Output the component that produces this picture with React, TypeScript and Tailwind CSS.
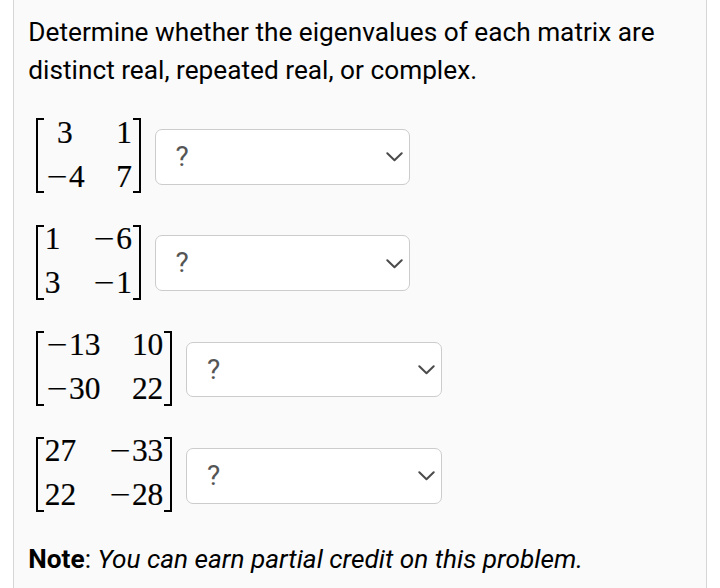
type Problem = { columns: number[][] };

const problems: Problem[] = [
  { columns: [[3, -4], [1, 7]] },
  { columns: [[1, 3], [-6, -1]] },
  { columns: [[-13, -30], [10, 22]] },
  { columns: [[27, 22], [-33, -28]] },
];

function Entry({ value }: { value: number }) {
  return (
    <span className="flex h-[44px] items-center justify-center leading-[44px]">
      {value < 0 && (
        <span className="inline-block w-[24.3px] origin-center scale-x-[1.21] text-center [-webkit-text-stroke:0.2px_#fafafa]">−</span>
      )}
      <span className="[-webkit-text-stroke:0.2px_black]">{Math.abs(value)}</span>
    </span>
  );
}

function Matrix({ columns }: Problem) {
  return (
    <div className="flex h-[75px] font-['Liberation_Serif',serif] text-[31.4px] text-black">
      <span className="w-2 border-y-2 border-l-2 border-black" />
      <div className="-mt-[9.9px] flex gap-[31.4px] pr-px pl-[0.5px]">
        {columns.map((column, i) => (
          <div key={i} className="pt-[2px]">
            {column.map((value, j) => (
              <Entry key={j} value={value} />
            ))}
          </div>
        ))}
      </div>
      <span className="w-2 border-y-2 border-r-2 border-black" />
    </div>
  );
}

function AnswerSelect() {
  return (
    <button className="mt-[10.75px] ml-[14.2px] flex h-[55.6px] w-[255.4px] items-center justify-between rounded-[7px] border border-[#cccccc] bg-white pr-[6px] pl-[19.5px] text-[28px] text-[#555555]">
      <span className="leading-none">?</span>
      <svg width="17" height="10" viewBox="0 0 17 10" fill="none" className="mt-px">
        <path d="M1.3 1.2L8.5 8.2L15.7 1.2" stroke="#4b4b4b" strokeWidth="2" strokeLinecap="round" strokeLinejoin="round" />
      </svg>
    </button>
  );
}

export default function App() {
  return (
    <div className="h-[588px] overflow-hidden bg-white pr-[13px] pl-[13px] font-['Roboto',sans-serif] text-[26.22px] text-black">
      <main className="h-full border-x border-[#d6d6d6] bg-[#fafafa] pt-[13px] pl-[14.3px]">
        <p className="leading-[38px]">
          Determine whether the eigenvalues of each matrix are
          <br />
          distinct real, repeated real, or complex.
        </p>
        <div className="mt-[29.4px] flex flex-col gap-[31.3px] pl-2">
          {problems.map((problem, i) => (
            <div key={i} className="flex items-start">
              <Matrix columns={problem.columns} />
              <AnswerSelect />
            </div>
          ))}
        </div>
        <p className="mt-[27.6px] leading-[38px]">
          <strong className="font-bold">Note</strong>: <em>You can earn partial credit on this problem.</em>
        </p>
      </main>
    </div>
  );
}
